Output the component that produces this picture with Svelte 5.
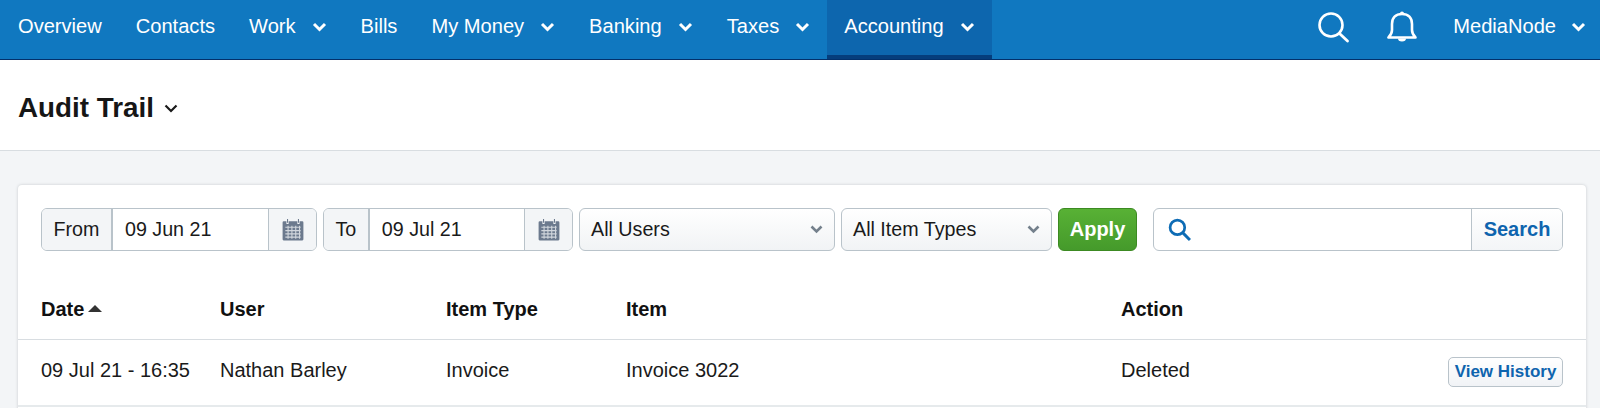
<script>
  let navItems = [
    { label: 'Overview' },
    { label: 'Contacts' },
    { label: 'Work', menu: true },
    { label: 'Bills' },
    { label: 'My Money', menu: true },
    { label: 'Banking', menu: true },
    { label: 'Taxes', menu: true },
    { label: 'Accounting', menu: true, active: true }
  ];

  let dateRanges = [
    { label: 'From', value: '09 Jun 21', cls: 'from' },
    { label: 'To', value: '09 Jul 21', cls: 'to' }
  ];

  let rows = [
    { date: '09 Jul 21 - 16:35', user: 'Nathan Barley', type: 'Invoice', item: 'Invoice 3022', action: 'Deleted' }
  ];
</script>

<div class="page">
  <nav class="topnav">
    <ul class="nav-left">
      {#each navItems as item}
        <li class="nav-item" class:active={item.active}>
          <span>{item.label}</span>
          {#if item.menu}
            <svg class="chev" viewBox="0 0 15 10" width="15" height="10"><path d="M2 2l5.500 5.500L13 2" fill="none" stroke="#fff" stroke-width="3" /></svg>
          {/if}
        </li>
      {/each}
    </ul>
    <div class="nav-right">
      <svg class="nav-search" viewBox="0 0 32 32" width="32" height="32"><circle cx="13" cy="14" r="11.500" fill="none" stroke="#fff" stroke-width="2.600" /><path d="M21.500 22.500l8 7.500" fill="none" stroke="#fff" stroke-width="2.800" stroke-linecap="round" /></svg>
      <svg class="nav-bell" viewBox="0 0 30 32" width="30" height="32"><path d="M15 3c-6.500 0-10 4-10 10v6c0 3.500-2 6-3.500 7.500h27c-1.500-1.500-3.500-4-3.500-7.500v-6c0-6-3.500-10-10-10z" fill="none" stroke="#fff" stroke-width="2.600" stroke-linejoin="round" /><path d="M13 2.500a2 2 0 0 1 4 0zM11 27.500h8a4 3 0 0 1-8 0z" fill="#fff" /></svg>
      <span class="account">MediaNode</span>
      <svg class="chev" viewBox="0 0 15 10" width="15" height="10"><path d="M2 2l5.500 5.500L13 2" fill="none" stroke="#fff" stroke-width="3" /></svg>
    </div>
  </nav>

  <header class="page-title">
    <h1>Audit Trail</h1>
    <svg viewBox="0 0 14 9" width="14" height="9"><path d="M1.500 1.500l5.500 5.500 5.500-5.500" fill="none" stroke="#1a1a1a" stroke-width="2.200" /></svg>
  </header>

  <main class="content">
    <section class="card">
      <div class="filters">
        {#each dateRanges as range}
          <div class="date-group {range.cls}">
            <span class="addon">{range.label}</span>
            <input class="date-input" value={range.value} />
            <span class="cal">
              <svg viewBox="0 0 20 21" width="22" height="23">
                <path d="M1.500 3h2.500v2.500h2v-2.500h8v2.500h2v-2.500h2.500a1 1 0 0 1 1 1v15.500a1 1 0 0 1-1 1h-17a1 1 0 0 1-1-1v-15.500a1 1 0 0 1 1-1z" fill="#6c7a8e" />
                <path d="M4.500 .8h1v3.500h-1zM14.500 .8h1v3.500h-1z" fill="#6c7a8e" />
                <path d="M3 8.500h14M3 11.500h14M3 14.500h14M3 17.500h14M5.500 7v12M9 7v12M12.500 7v12M16 7v12" stroke="#f3f5f7" stroke-width="1" fill="none" opacity=".75" />
              </svg>
            </span>
          </div>
        {/each}

        <div class="select users">
          <span>All Users</span>
          <svg viewBox="0 0 13 9" width="13" height="9"><path d="M1.500 1.500l5 5 5-5" fill="none" stroke="#74808c" stroke-width="2.600" /></svg>
        </div>
        <div class="select types">
          <span>All Item Types</span>
          <svg viewBox="0 0 13 9" width="13" height="9"><path d="M1.500 1.500l5 5 5-5" fill="none" stroke="#74808c" stroke-width="2.600" /></svg>
        </div>
        <button class="apply">Apply</button>

        <div class="search">
          <div class="search-field">
            <svg viewBox="0 0 22 22" width="23" height="23"><circle cx="9" cy="9" r="7" fill="none" stroke="#0e6cb5" stroke-width="2.600" /><path d="M14 14l7 7" stroke="#0e6cb5" stroke-width="2.800" fill="none" /></svg>
          </div>
          <button class="search-btn">Search</button>
        </div>
      </div>

      <table>
        <thead>
          <tr>
            <th class="c-date">Date<span class="sort"></span></th>
            <th class="c-user">User</th>
            <th class="c-type">Item Type</th>
            <th class="c-item">Item</th>
            <th class="c-action">Action</th>
            <th class="c-btn"></th>
          </tr>
        </thead>
        <tbody>
          {#each rows as row}
            <tr>
              <td>{row.date}</td>
              <td>{row.user}</td>
              <td>{row.type}</td>
              <td>{row.item}</td>
              <td>{row.action}</td>
              <td class="c-btn"><button class="history">View History</button></td>
            </tr>
          {/each}
        </tbody>
      </table>
      <div class="next-row"></div>
    </section>
  </main>
</div>

<style>
  :global(body) {
    margin: 0;
    overflow: hidden;
    background: #f3f5f7;
  }

  .page {
    font-family: "Liberation Sans", Arial, sans-serif;
    font-size: 20px;
    color: #1a1a1a;
    height: 408px;
    overflow: hidden;
  }

  /* top bar */
  .topnav {
    height: 59px;
    background: #1078c0;
    border-bottom: 1px solid #03306b;
    display: flex;
    justify-content: space-between;
    color: #fff;
    font-size: 20.100px;
  }
  .nav-left {
    display: flex;
    list-style: none;
    margin: 0;
    padding: 0 0 0 1px;
  }
  .nav-item {
    display: flex;
    align-items: center;
    gap: 16px;
    padding: 0 17px 6px;
    box-sizing: border-box;
  }
  .nav-item.active {
    background: #0d66ae;
    border-bottom: 4px solid #053d7c;
    padding-bottom: 2px;
  }
  .nav-right {
    display: flex;
    align-items: center;
    padding: 0 14px 6px 0;
  }
  .nav-bell {
    margin-left: 37px;
  }
  .account {
    margin: 0 15px 0 36px;
  }

  /* title strip */
  .page-title {
    height: 84px;
    padding: 6px 18px 0;
    background: #fff;
    border-bottom: 1px solid #d8dde1;
    display: flex;
    align-items: center;
    gap: 10px;
  }
  .page-title h1 {
    margin: 0;
    font-size: 27.800px;
    font-weight: 700;
    color: #161616;
  }

  /* card */
  .content {
    padding: 34px 14px 0 18px;
  }
  .card {
    background: #fff;
    border-radius: 4px 4px 0 0;
    box-shadow: 0 0 3px rgba(60, 70, 80, .25);
    height: 240px;
  }

  .filters {
    display: flex;
    padding: 23px 23px 0 23px;
    height: 43px;
    font-size: 19.700px;
  }
  .date-group {
    display: flex;
    border: 1px solid #b9c3ca;
    border-radius: 6px;
    overflow: hidden;
    box-sizing: border-box;
    height: 43px;
    margin-right: 6px;
  }
  .date-group.from {
    width: 276px;
  }
  .date-group.to {
    width: 250px;
  }
  .addon {
    background: #f3f5f7;
    border-right: 2px solid #b9c3ca;
    padding: 0 11.500px;
    line-height: 41px;
    flex: none;
  }
  .date-input {
    flex: 1;
    min-width: 0;
    border: 0;
    outline: 0;
    padding: 0 12px;
    font: inherit;
    color: #1a1a1a;
  }
  .cal {
    flex: none;
    width: 47px;
    background: #f3f5f7;
    border-left: 1px solid #b9c3ca;
    display: flex;
    align-items: center;
    justify-content: center;
  }
  .select {
    display: flex;
    align-items: center;
    justify-content: space-between;
    box-sizing: border-box;
    height: 43px;
    padding: 0 11px;
    border: 1px solid #b9c3ca;
    border-radius: 6px;
    background: linear-gradient(#fff, #f1f3f5);
    margin-right: 6px;
  }
  .select.users {
    width: 256px;
  }
  .select.types {
    width: 211px;
  }
  .apply {
    width: 79px;
    height: 43px;
    border: 1px solid #3c8a22;
    border-radius: 6px;
    background: linear-gradient(#58b135, #459a2b);
    color: #fff;
    font: 700 20px "Liberation Sans", Arial, sans-serif;
    padding: 0;
  }
  .search {
    display: flex;
    width: 410px;
    height: 43px;
    margin-left: 16px;
    box-sizing: border-box;
    border: 1px solid #b9c3ca;
    border-radius: 6px;
    overflow: hidden;
  }
  .search-field {
    flex: 1;
    display: flex;
    align-items: center;
    padding-left: 14px;
  }
  .search-btn {
    width: 91px;
    border: 0;
    border-left: 1px solid #b9c3ca;
    background: linear-gradient(#fff, #f3f5f7);
    color: #0e64ae;
    font: 700 20px "Liberation Sans", Arial, sans-serif;
    padding: 0;
  }

  /* table */
  table {
    width: 100%;
    margin-top: 22px;
    border-collapse: collapse;
    table-layout: fixed;
  }
  th {
    height: 66px;
    padding: 8px 0 0;
    box-sizing: border-box;
    text-align: left;
    font-weight: 700;
    color: #111;
    border-bottom: 1px solid #d8dde1;
  }
  td {
    height: 66px;
    padding: 0 0 4px;
    box-sizing: border-box;
  }
  th:first-child,
  td:first-child {
    padding-left: 23px;
  }
  .c-date {
    width: 202px;
  }
  .c-user {
    width: 226px;
  }
  .c-type {
    width: 180px;
  }
  .c-item {
    width: 495px;
  }
  .c-action {
    width: 200px;
  }
  .sort {
    display: inline-block;
    width: 0;
    height: 0;
    margin-left: 4px;
    vertical-align: 4px;
    border-left: 7px solid transparent;
    border-right: 7px solid transparent;
    border-bottom: 7px solid #333;
  }
  td.c-btn {
    text-align: right;
    padding-right: 23px;
  }
  .history {
    width: 115px;
    height: 30px;
    margin-top: 3px;
    border: 1px solid #b9c3ca;
    border-radius: 5px;
    background: linear-gradient(#fff, #f1f3f6);
    color: #0e64ae;
    font: 700 17px "Liberation Sans", Arial, sans-serif;
    padding: 0;
  }
  .next-row {
    height: 2px;
    background: #e6eaec;
  }
</style>
